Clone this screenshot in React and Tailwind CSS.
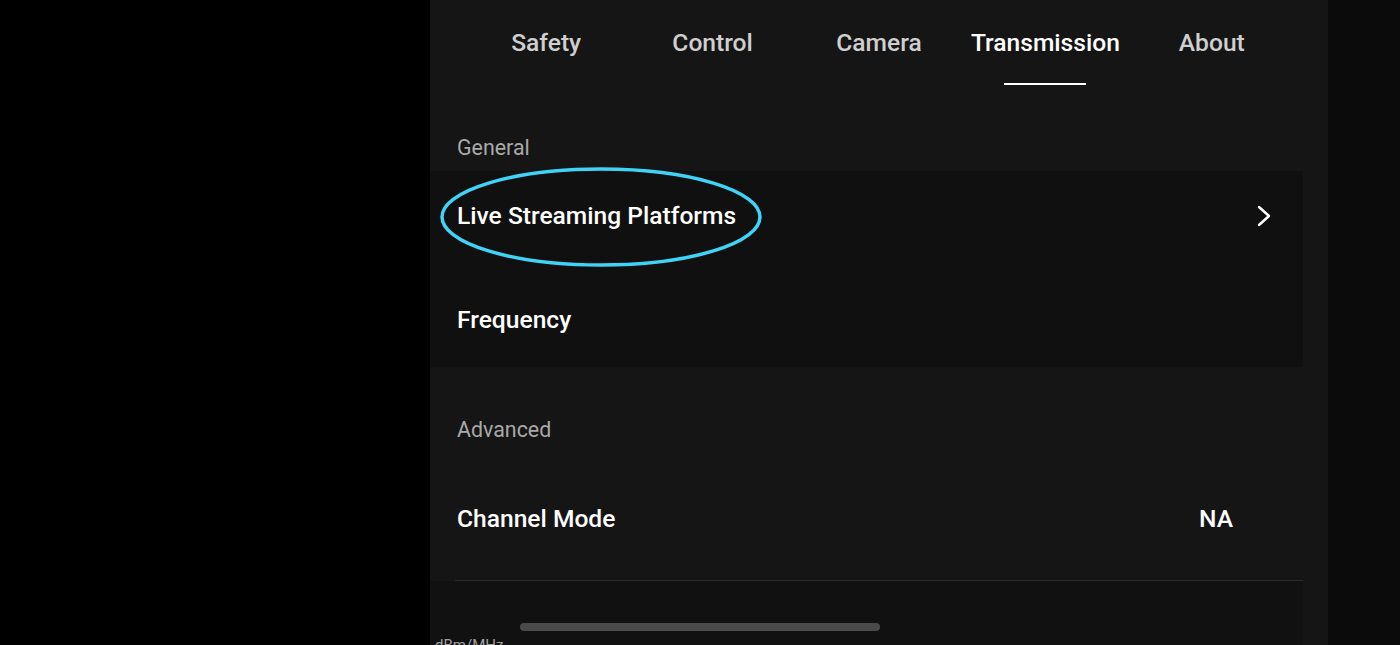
import React from 'react';

const tabs = ['Safety', 'Control', 'Camera', 'Transmission', 'About'];
const active = 'Transmission';

const Chevron = () => (
  <svg width="14" height="22" viewBox="0 0 14 22" fill="none">
    <polyline points="2,2 12,11 2,20" stroke="#ffffff" strokeWidth="2.4" strokeLinecap="round" strokeLinejoin="round" />
  </svg>
);

const Tabs = () => (
  <div className="grid h-[86px] shrink-0 grid-cols-5 px-[33px]">
    {tabs.map(t => (
      <div key={t} className="flex flex-col items-center">
        <span className={`mt-[28px] text-[24.6px] leading-[30px] font-medium ${t === active ? 'text-white' : 'text-[#cfcfcf]'}`}>{t}</span>
        {t === active && <div className="mt-[25px] h-[2px] w-[82px] bg-white" />}
      </div>
    ))}
  </div>
);

export default function App() {
  return (
    <div className="flex h-[645px] w-[1400px] overflow-hidden bg-black" style={{ fontFamily: 'Roboto, "Noto Sans", sans-serif' }}>
      <div className="w-[430px] shrink-0 bg-black" />
      <div className="relative flex w-[898px] shrink-0 flex-col bg-[#151515]">
        <Tabs />

        <div className="h-[85px] shrink-0 pl-[27px] pt-[48px]">
          <p className="text-[21.4px] leading-[28px] text-[#a9a9a9]">General</p>
        </div>

        <div className="mr-[25px] shrink-0 bg-[#101010]">
          <div className="relative flex h-[90px] items-center justify-between pl-[27px] pr-[32px]">
            <span className="text-[24.6px] leading-[30px] font-medium text-white">Live Streaming Platforms</span>
            <Chevron />
            {/* annotation ring */}
            <svg className="pointer-events-none absolute left-[9px] top-[-5px]" width="324" height="102" viewBox="0 0 324 102">
              <ellipse cx="162" cy="51" rx="159" ry="48" fill="none" stroke="#3fd3f6" strokeWidth="3.5" />
            </svg>
          </div>
          <div className="h-[106px] pl-[27px] pt-[44px]">
            <span className="text-[24.6px] leading-[30px] font-medium text-white">Frequency</span>
          </div>
        </div>

        <div className="h-[77px] shrink-0 pl-[27px] pt-[49px]">
          <p className="text-[21.4px] leading-[28px] text-[#a9a9a9]">Advanced</p>
        </div>

        <div className="mr-[25px] flex h-[136px] shrink-0 items-start justify-between pl-[27px] pr-[70px] pt-[60px]">
          <span className="text-[24.6px] leading-[30px] font-medium text-white">Channel Mode</span>
          <span className="text-[24.6px] leading-[30px] font-medium text-white">NA</span>
        </div>
        <div className="mx-[25px] h-px shrink-0 bg-[#2b2b2b]" />

        <div className="mr-[25px] flex-1 overflow-hidden bg-[#111111] pl-[5px] pt-[55px]">
          <span className="block text-[15px] leading-[18px] text-[#a0a0a0]">dBm/MHz</span>
        </div>

        {/* scroll indicator */}
        <div className="absolute left-[90px] top-[623px] h-[8px] w-[360px] rounded-full bg-[#4a4a4a]" />
      </div>
      <div className="flex-1 bg-[#0b0b0b]" />
    </div>
  );
}
